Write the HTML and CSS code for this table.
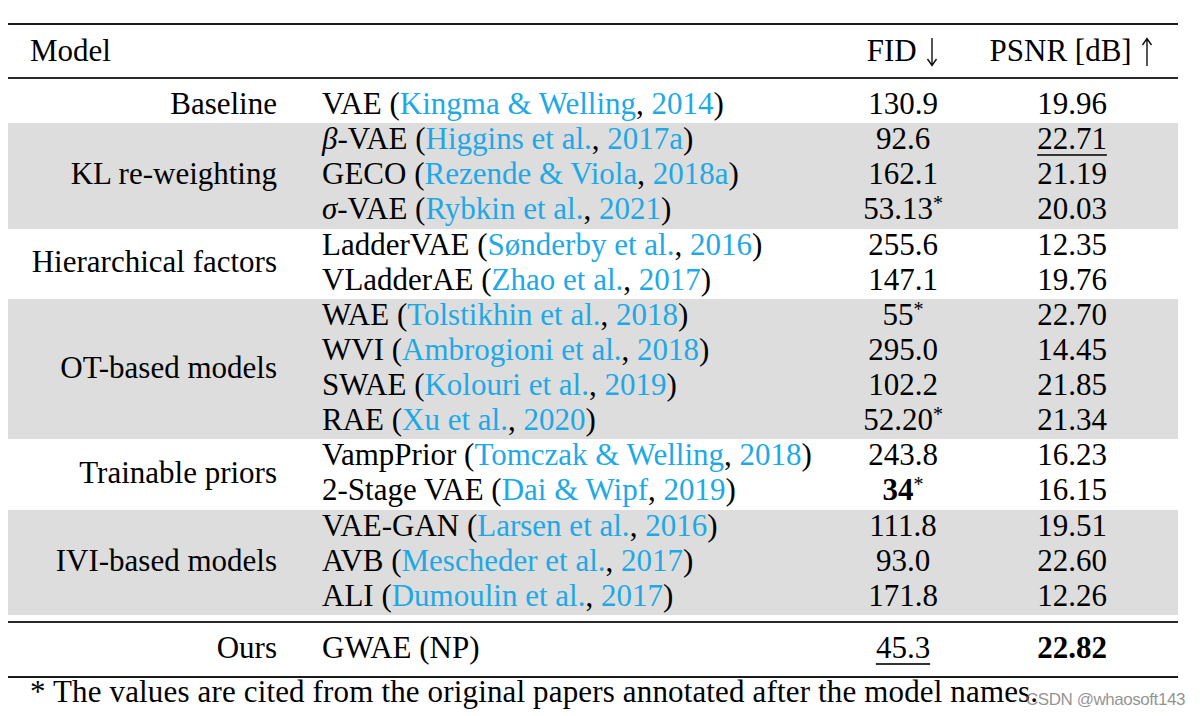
FILE: index.html
```html
<!DOCTYPE html>
<html>
<head>
<meta charset="utf-8">
<link rel="stylesheet" href="styles.css">
</head>
<body>
<div class="page">
  <div class="table">
    <div class="header">
      <div class="h-model">Model</div>
      <div class="h-blank"></div>
      <div class="num">FID <svg class="arrow" viewBox="0 0 14 30" width="14" height="30"><path d="M7 1 V28 M2.5 22 L7 28.5 L11.5 22" fill="none" stroke="#111" stroke-width="1.4"/></svg></div>
      <div class="num">PSNR [dB] <svg class="arrow" viewBox="0 0 14 30" width="14" height="30"><path d="M7 29 V2 M2.5 8 L7 1.5 L11.5 8" fill="none" stroke="#111" stroke-width="1.4"/></svg></div>
    </div>

    <div class="band first">
      <div class="group">Baseline</div>
      <div class="rows">
        <div class="row"><div class="model">VAE (<span class="cite">Kingma &amp; Welling</span>, <span class="cite">2014</span>)</div><div class="num">130.9</div><div class="num">19.96</div></div>
      </div>
    </div>

    <div class="band gray">
      <div class="group">KL re-weighting</div>
      <div class="rows">
        <div class="row"><div class="model"><i>β</i>-VAE (<span class="cite">Higgins et al.</span>, <span class="cite">2017a</span>)</div><div class="num">92.6</div><div class="num"><span class="ul">22.71</span></div></div>
        <div class="row"><div class="model">GECO (<span class="cite">Rezende &amp; Viola</span>, <span class="cite">2018a</span>)</div><div class="num">162.1</div><div class="num">21.19</div></div>
        <div class="row"><div class="model"><i>σ</i>-VAE (<span class="cite">Rybkin et al.</span>, <span class="cite">2021</span>)</div><div class="num">53.13<span class="sup">*</span></div><div class="num">20.03</div></div>
      </div>
    </div>

    <div class="band">
      <div class="group">Hierarchical factors</div>
      <div class="rows">
        <div class="row"><div class="model">LadderVAE (<span class="cite">Sønderby et al.</span>, <span class="cite">2016</span>)</div><div class="num">255.6</div><div class="num">12.35</div></div>
        <div class="row"><div class="model">VLadderAE (<span class="cite">Zhao et al.</span>, <span class="cite">2017</span>)</div><div class="num">147.1</div><div class="num">19.76</div></div>
      </div>
    </div>

    <div class="band gray">
      <div class="group">OT-based models</div>
      <div class="rows">
        <div class="row"><div class="model">WAE (<span class="cite">Tolstikhin et al.</span>, <span class="cite">2018</span>)</div><div class="num">55<span class="sup">*</span></div><div class="num">22.70</div></div>
        <div class="row"><div class="model">WVI (<span class="cite">Ambrogioni et al.</span>, <span class="cite">2018</span>)</div><div class="num">295.0</div><div class="num">14.45</div></div>
        <div class="row"><div class="model">SWAE (<span class="cite">Kolouri et al.</span>, <span class="cite">2019</span>)</div><div class="num">102.2</div><div class="num">21.85</div></div>
        <div class="row"><div class="model">RAE (<span class="cite">Xu et al.</span>, <span class="cite">2020</span>)</div><div class="num">52.20<span class="sup">*</span></div><div class="num">21.34</div></div>
      </div>
    </div>

    <div class="band">
      <div class="group">Trainable priors</div>
      <div class="rows">
        <div class="row"><div class="model">VampPrior (<span class="cite">Tomczak &amp; Welling</span>, <span class="cite">2018</span>)</div><div class="num">243.8</div><div class="num">16.23</div></div>
        <div class="row"><div class="model">2-Stage VAE (<span class="cite">Dai &amp; Wipf</span>, <span class="cite">2019</span>)</div><div class="num"><b>34</b><span class="sup">*</span></div><div class="num">16.15</div></div>
      </div>
    </div>

    <div class="band gray last">
      <div class="group">IVI-based models</div>
      <div class="rows">
        <div class="row"><div class="model">VAE-GAN (<span class="cite">Larsen et al.</span>, <span class="cite">2016</span>)</div><div class="num">111.8</div><div class="num">19.51</div></div>
        <div class="row"><div class="model">AVB (<span class="cite">Mescheder et al.</span>, <span class="cite">2017</span>)</div><div class="num">93.0</div><div class="num">22.60</div></div>
        <div class="row"><div class="model">ALI (<span class="cite">Dumoulin et al.</span>, <span class="cite">2017</span>)</div><div class="num">171.8</div><div class="num">12.26</div></div>
      </div>
    </div>

    <div class="band ours">
      <div class="group">Ours</div>
      <div class="rows">
        <div class="row"><div class="model">GWAE (NP)</div><div class="num"><span class="ul">45.3</span></div><div class="num"><b>22.82</b></div></div>
      </div>
    </div>
  </div>
  <div class="footnote">* The values are cited from the original papers annotated after the model names.</div>
  <div class="watermark">CSDN @whaosoft143</div>
</div>
</body>
</html>
```

FILE: styles.css
```css
html, body {
  margin: 0;
  padding: 0;
  background: #ffffff;
}

.page {
  position: relative;
  width: 1200px;
  height: 716px;
  padding-top: 23px;
  box-sizing: border-box;
  font-family: "Liberation Serif", "Times New Roman", serif;
  font-size: 31px;
  color: #000;
  overflow: hidden;
}

.table {
  margin-left: 8px;
  width: 1170px;
}

.header {
  display: grid;
  grid-template-columns: 292px 540px 126px 212px;
  border-top: 2px solid #1a1a1a;
  border-bottom: 2px solid #2a2a2a;
  padding: 8px 0 9px;
  line-height: 35px;
  height: 35px;
}

.h-model {
  padding-left: 22px;
}

.arrow {
  vertical-align: -6px;
  margin-left: 1px;
}

.num {
  text-align: center;
  white-space: nowrap;
}

.band {
  display: flex;
}

.band.gray {
  background: #dddddd;
}

.band.first {
  padding-top: 9px;
}

.band.last {
  margin-bottom: 6px;
}

.band.ours {
  border-top: 2px solid #2a2a2a;
  border-bottom: 2px solid #1a1a1a;
  padding: 9px 0;
}

.group {
  width: 292px;
  flex: none;
  box-sizing: border-box;
  padding-right: 23px;
  padding-bottom: 4px;
  text-align: right;
  display: flex;
  align-items: center;
  justify-content: flex-end;
  white-space: nowrap;
  line-height: 31px;
}

.rows {
  display: flex;
  flex-direction: column;
}

.row {
  display: grid;
  grid-template-columns: 540px 126px 212px;
  align-items: start;
  height: 35.14px;
  line-height: 31px;
}

.model {
  padding-left: 22px;
  white-space: nowrap;
}

.cite {
  color: #1ea9e6;
}

.ul {
  text-decoration: underline;
  text-decoration-thickness: 2px;
  text-underline-offset: 5px;
  text-decoration-color: #333;
}

.sup {
  font-size: 20px;
  vertical-align: 9px;
  line-height: 0;
}

.footnote {
  padding-left: 30px;
  line-height: 28px;
  letter-spacing: 0.15px;
  white-space: nowrap;
}

.watermark {
  position: absolute;
  left: 1026px;
  top: 691px;
  font-family: "Liberation Sans", Arial, sans-serif;
  font-size: 17px;
  line-height: 18px;
  letter-spacing: -0.45px;
  color: rgba(110, 110, 110, 0.75);
  white-space: nowrap;
}
```
